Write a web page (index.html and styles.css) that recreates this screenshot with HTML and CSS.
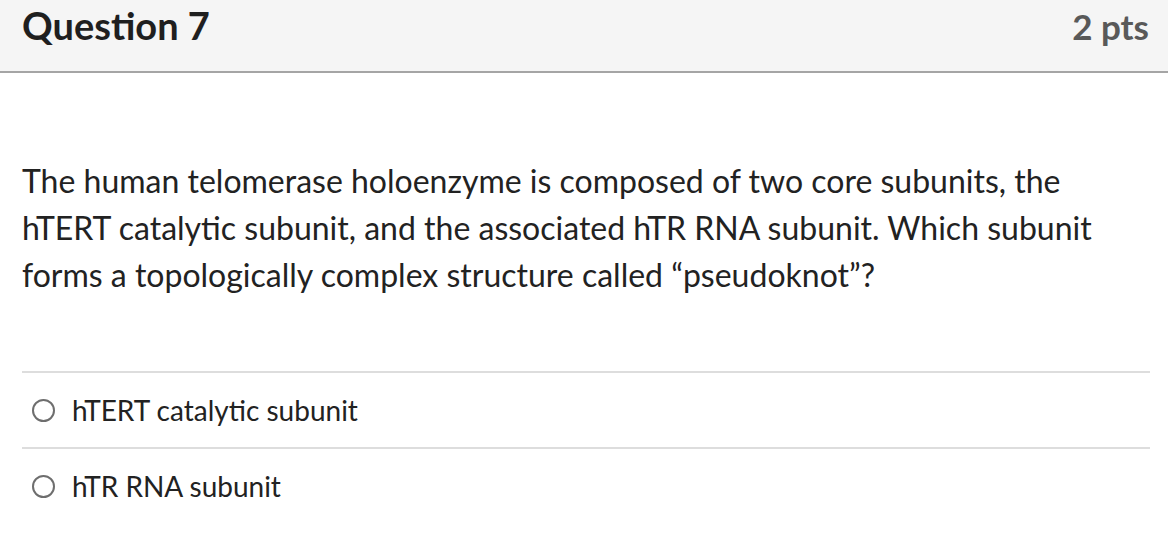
FILE: index.html
```html
<!DOCTYPE html>
<html>
<head>
<meta charset="utf-8">
<link rel="stylesheet" href="styles.css">
</head>
<body>
<div class="question">
  <div class="header">
    <h2 class="title">Question 7</h2>
    <div class="pts">2 pts</div>
  </div>
  <div class="content">
    <p class="text">The human telomerase holoenzyme is composed of two core subunits, the hTERT catalytic subunit, and the associated hTR RNA subunit. Which subunit forms a topologically complex structure called “pseudoknot”?</p>
    <div class="answers">
      <label class="answer"><span class="radio"></span><span class="label">hTERT catalytic subunit</span></label>
      <label class="answer"><span class="radio"></span><span class="label">hTR RNA subunit</span></label>
    </div>
  </div>
</div>
</body>
</html>
```
FILE: styles.css
```css
html, body { margin: 0; padding: 0; background: #fff; }
body { font-family: Lato, "Noto Sans", sans-serif; color: #222; }
.header {
  height: 69px;
  padding: 2px 19px 0 22px;
  background: #f5f5f5;
  border-bottom: 2px solid #a5a5a5;
  display: flex;
  align-items: baseline;
  justify-content: space-between;
  line-height: 46px;
}
.title { margin: 0; font-size: 38px; font-weight: 700; color: #1f1f1f; }
.pts { font-size: 35px; font-weight: 700; color: #595959; }
.content { padding: 0 18px 0 22px; }
.text {
  margin: 84px 0 0 0;
  font-size: 32px;
  line-height: 47px;
  color: #222;
}
.answers { margin-top: 73px; }
.answer {
  display: flex;
  align-items: center;
  height: 74px;
  border-top: 2px solid #ddd;
  gap: 17px;
}
.radio {
  width: 19px; height: 19px;
  border: 2px solid #6e6e6e;
  border-radius: 50%;
  margin-left: 10px;
  flex: none;
}
.label { font-size: 28px; color: #222; }
```
